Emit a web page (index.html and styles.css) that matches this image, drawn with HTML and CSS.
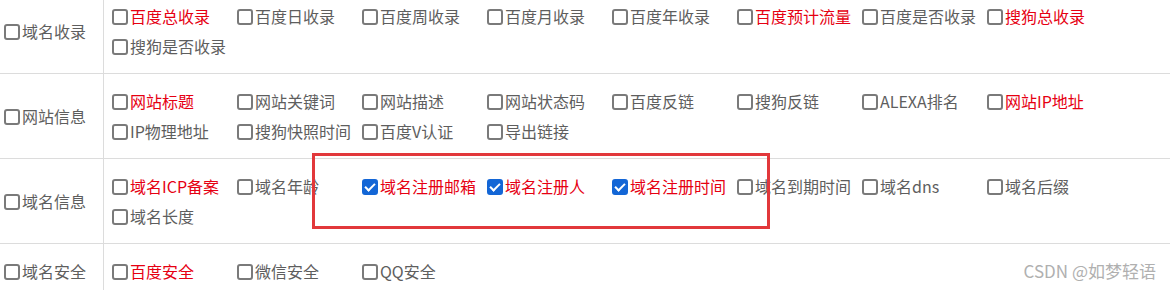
FILE: index.html
```html
<!DOCTYPE html>
<html lang="zh-CN">
<head>
<meta charset="utf-8">
<link rel="stylesheet" href="styles.css">
</head>
<body>
<div class="page">
  <div class="table">
    <div class="row">
      <div class="label"><label class="opt"><input type="checkbox">域名收录</label></div>
      <div class="items">
        <label class="opt red"><input type="checkbox">百度总收录</label>
        <label class="opt"><input type="checkbox">百度日收录</label>
        <label class="opt"><input type="checkbox">百度周收录</label>
        <label class="opt"><input type="checkbox">百度月收录</label>
        <label class="opt"><input type="checkbox">百度年收录</label>
        <label class="opt red"><input type="checkbox">百度预计流量</label>
        <label class="opt"><input type="checkbox">百度是否收录</label>
        <label class="opt red"><input type="checkbox">搜狗总收录</label>
        <label class="opt"><input type="checkbox">搜狗是否收录</label>
      </div>
    </div>
    <div class="row">
      <div class="label"><label class="opt"><input type="checkbox">网站信息</label></div>
      <div class="items">
        <label class="opt red"><input type="checkbox">网站标题</label>
        <label class="opt"><input type="checkbox">网站关键词</label>
        <label class="opt"><input type="checkbox">网站描述</label>
        <label class="opt"><input type="checkbox">网站状态码</label>
        <label class="opt"><input type="checkbox">百度反链</label>
        <label class="opt"><input type="checkbox">搜狗反链</label>
        <label class="opt"><input type="checkbox">ALEXA排名</label>
        <label class="opt red"><input type="checkbox">网站IP地址</label>
        <label class="opt"><input type="checkbox">IP物理地址</label>
        <label class="opt"><input type="checkbox">搜狗快照时间</label>
        <label class="opt"><input type="checkbox">百度V认证</label>
        <label class="opt"><input type="checkbox">导出链接</label>
      </div>
    </div>
    <div class="row">
      <div class="label"><label class="opt"><input type="checkbox">域名信息</label></div>
      <div class="items">
        <label class="opt red"><input type="checkbox">域名ICP备案</label>
        <label class="opt"><input type="checkbox">域名年龄</label>
        <label class="opt red"><input type="checkbox" checked>域名注册邮箱</label>
        <label class="opt red"><input type="checkbox" checked>域名注册人</label>
        <label class="opt red"><input type="checkbox" checked>域名注册时间</label>
        <label class="opt"><input type="checkbox">域名到期时间</label>
        <label class="opt"><input type="checkbox">域名dns</label>
        <label class="opt"><input type="checkbox">域名后缀</label>
        <label class="opt"><input type="checkbox">域名长度</label>
      </div>
    </div>
    <div class="row">
      <div class="label"><label class="opt"><input type="checkbox">域名安全</label></div>
      <div class="items">
        <label class="opt red"><input type="checkbox">百度安全</label>
        <label class="opt"><input type="checkbox">微信安全</label>
        <label class="opt"><input type="checkbox">QQ安全</label>
      </div>
    </div>
  </div>
  <div class="highlight"></div>
  <div class="watermark">CSDN @如梦轻语</div>
</div>
</body>
</html>
```
FILE: styles.css
```css
html, body {
  margin: 0;
  padding: 0;
  background: #fff;
  overflow: hidden;
}
.page {
  position: relative;
  width: 1170px;
  height: 290px;
  overflow: hidden;
  font-family: "Noto Sans CJK SC", "Microsoft YaHei", sans-serif;
  font-size: 16px;
  color: #5e5e5e;
}
.table {
  margin-top: -11px;
}
.row {
  display: grid;
  grid-template-columns: 104px 1fr;
  border-bottom: 1px solid #dcdcdc;
}
.label {
  border-right: 1px solid #dcdcdc;
  display: flex;
  align-items: center;
}
.items {
  display: flex;
  flex-wrap: wrap;
  padding: 12px 0 12px 4px;
}
.opt {
  display: flex;
  align-items: center;
  height: 30px;
  white-space: nowrap;
  line-height: 30px;
}
.items .opt {
  width: 125px;
}
.opt input {
  appearance: none;
  -webkit-appearance: none;
  box-sizing: border-box;
  position: relative;
  width: 16px;
  height: 16px;
  margin: 1px 2px 0 4px;
  border: 2px solid #7a7a7a;
  border-radius: 3px;
  background: #fff;
  flex: none;
}
.opt input:checked {
  background: #1366d6;
  border-color: #1366d6;
}
.opt input:checked::after {
  content: "";
  position: absolute;
  left: 3px;
  top: 0px;
  width: 4px;
  height: 8px;
  border: solid #fff;
  border-width: 0 2px 2px 0;
  transform: rotate(45deg);
}
.red {
  color: #e60012;
}
.highlight {
  position: absolute;
  left: 312px;
  top: 153px;
  width: 452px;
  height: 70px;
  border: 3px solid #e2383b;
}
.watermark {
  position: absolute;
  right: 14px;
  bottom: 7px;
  font-family: "Noto Sans CJK SC", sans-serif;
  font-size: 17px;
  color: #b0b0b0;
}
```
